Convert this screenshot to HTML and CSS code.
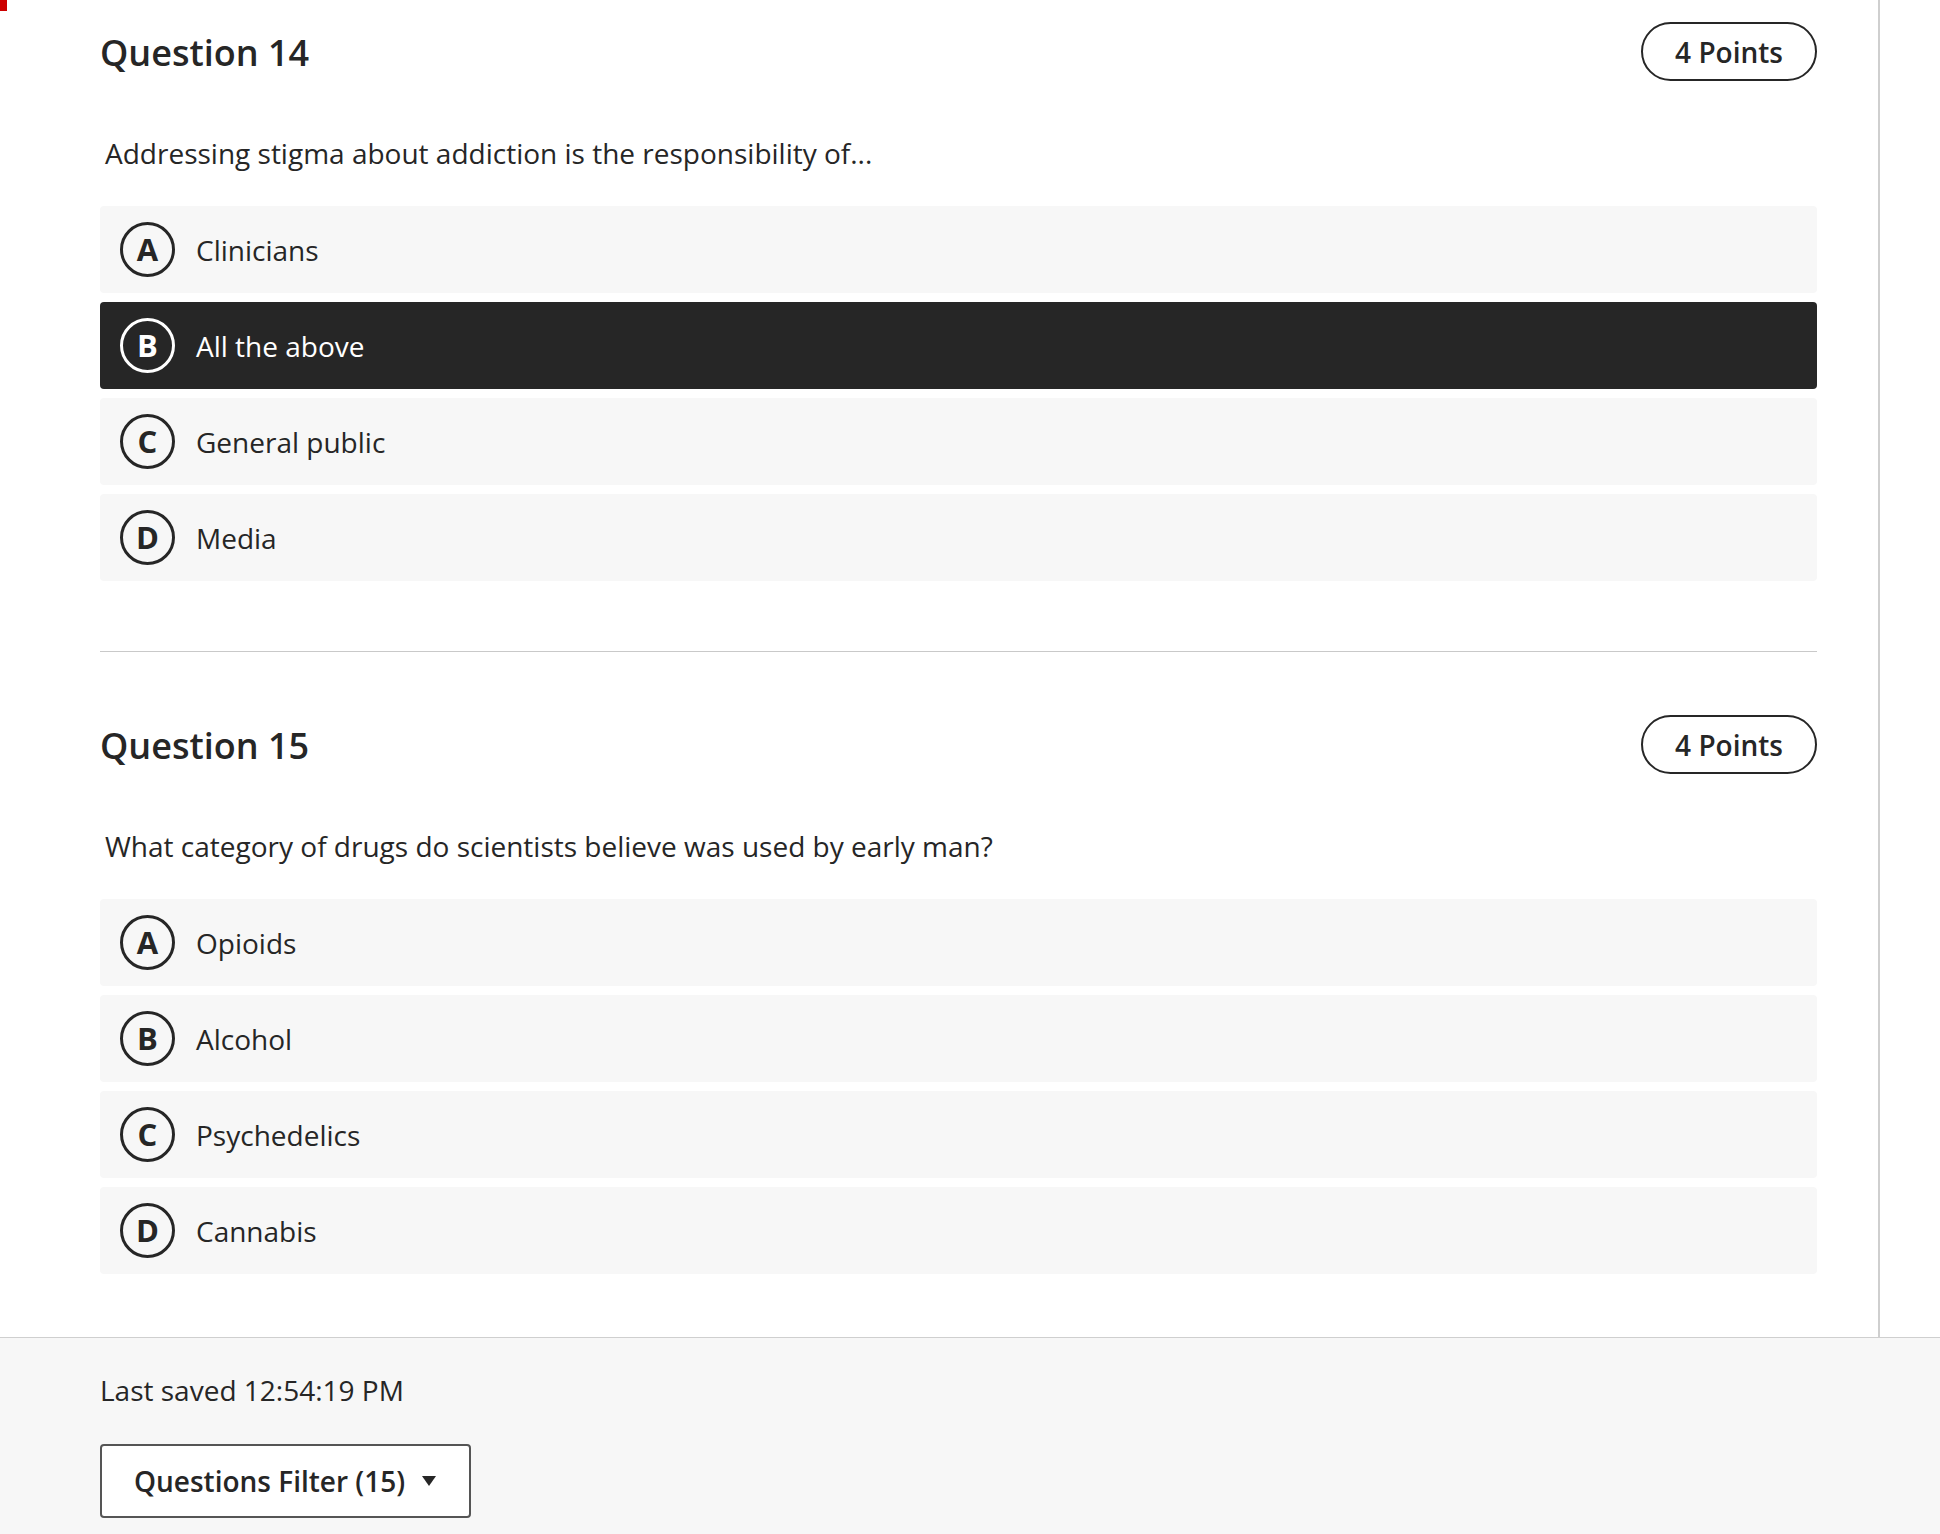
FILE: index.html
```html
<!DOCTYPE html>
<html lang="en">
<head>
    <meta charset="UTF-8">
    <meta name="viewport" content="width=device-width, initial-scale=1.0">
    <title>Assessment</title>
    <link rel="stylesheet" href="styles.css">
</head>
<body>
    <span class="focus-mark"></span>
    <div class="page">
        <main class="main">
            <div class="content">
                <section class="question">
                    <div class="question-header">
                        <h2>Question 14</h2>
                        <span class="points">4 Points</span>
                    </div>
                    <p class="question-text">Addressing stigma about addiction is the responsibility of...</p>
                    <ul class="options">
                        <li class="option"><span class="letter">A</span>Clinicians</li>
                        <li class="option selected"><span class="letter">B</span>All the above</li>
                        <li class="option"><span class="letter">C</span>General public</li>
                        <li class="option"><span class="letter">D</span>Media</li>
                    </ul>
                </section>

                <hr class="divider">

                <section class="question">
                    <div class="question-header">
                        <h2>Question 15</h2>
                        <span class="points">4 Points</span>
                    </div>
                    <p class="question-text">What category of drugs do scientists believe was used by early man?</p>
                    <ul class="options">
                        <li class="option"><span class="letter">A</span>Opioids</li>
                        <li class="option"><span class="letter">B</span>Alcohol</li>
                        <li class="option"><span class="letter">C</span>Psychedelics</li>
                        <li class="option"><span class="letter">D</span>Cannabis</li>
                    </ul>
                </section>
            </div>
        </main>
        <div class="side"></div>
    </div>

    <footer class="footer">
        <p class="saved">Last saved 12:54:19 PM</p>
        <button class="filter-btn">Questions Filter (15) <span class="caret"></span></button>
    </footer>
</body>
</html>
```

FILE: styles.css
```css
body {
    margin: 0;
    font-family: "Open Sans", "Liberation Sans", sans-serif;
    color: #262626;
    background-color: white;
}
.focus-mark {
    position: absolute;
    top: 0;
    left: 0;
    width: 7px;
    height: 11px;
    background-color: #c00;
}
.page {
    display: flex;
}
.main {
    width: 1878px;
    border-right: 2px solid #cfcfcf;
}
.side {
    flex: 1;
}
.content {
    padding: 22px 61px 63px 100px;
}
.question-header {
    display: flex;
    justify-content: space-between;
    align-items: center;
}
.question-header h2 {
    margin: 3px 0 0 0;
    font-size: 36px;
    font-weight: 600;
    line-height: 1.2;
}
.points {
    display: flex;
    align-items: center;
    height: 55px;
    padding: 0 32px;
    border: 2px solid #262626;
    border-radius: 30px;
    font-size: 28px;
    font-weight: 600;
}
.question-text {
    margin: 50px 0 30px 0;
    padding-left: 5px;
    font-size: 28px;
    line-height: 45px;
}
.options {
    list-style: none;
    margin: 0;
    padding: 0;
}
.option {
    display: flex;
    align-items: center;
    gap: 21px;
    height: 87px;
    margin-bottom: 9px;
    padding-left: 20px;
    background-color: #f7f7f7;
    border-radius: 4px;
    font-size: 28px;
}
.option:last-child {
    margin-bottom: 0;
}
.option.selected {
    background-color: #262626;
    color: white;
}
.letter {
    display: flex;
    align-items: center;
    justify-content: center;
    width: 49px;
    height: 49px;
    border: 3px solid #262626;
    border-radius: 50%;
    font-size: 31px;
    font-weight: 700;
    line-height: 1;
}
.selected .letter {
    border-color: white;
}
.divider {
    margin: 70px 0 63px 0;
    border: none;
    border-top: 1px solid #c9c9c9;
}
.footer {
    border-top: 1px solid #cfcfcf;
    background-color: #f7f7f7;
    padding: 31px 100px 17px 100px;
}
.saved {
    margin: 0 0 33px 0;
    font-size: 28px;
    line-height: 42px;
}
.filter-btn {
    display: flex;
    align-items: center;
    gap: 17px;
    height: 74px;
    padding: 0 33px 0 32px;
    background-color: white;
    border: 2px solid #555;
    border-radius: 4px;
    font-family: inherit;
    font-size: 28px;
    font-weight: 600;
    color: #262626;
}
.caret {
    width: 0;
    height: 0;
    border-left: 7px solid transparent;
    border-right: 7px solid transparent;
    border-top: 10px solid #262626;
}
```
